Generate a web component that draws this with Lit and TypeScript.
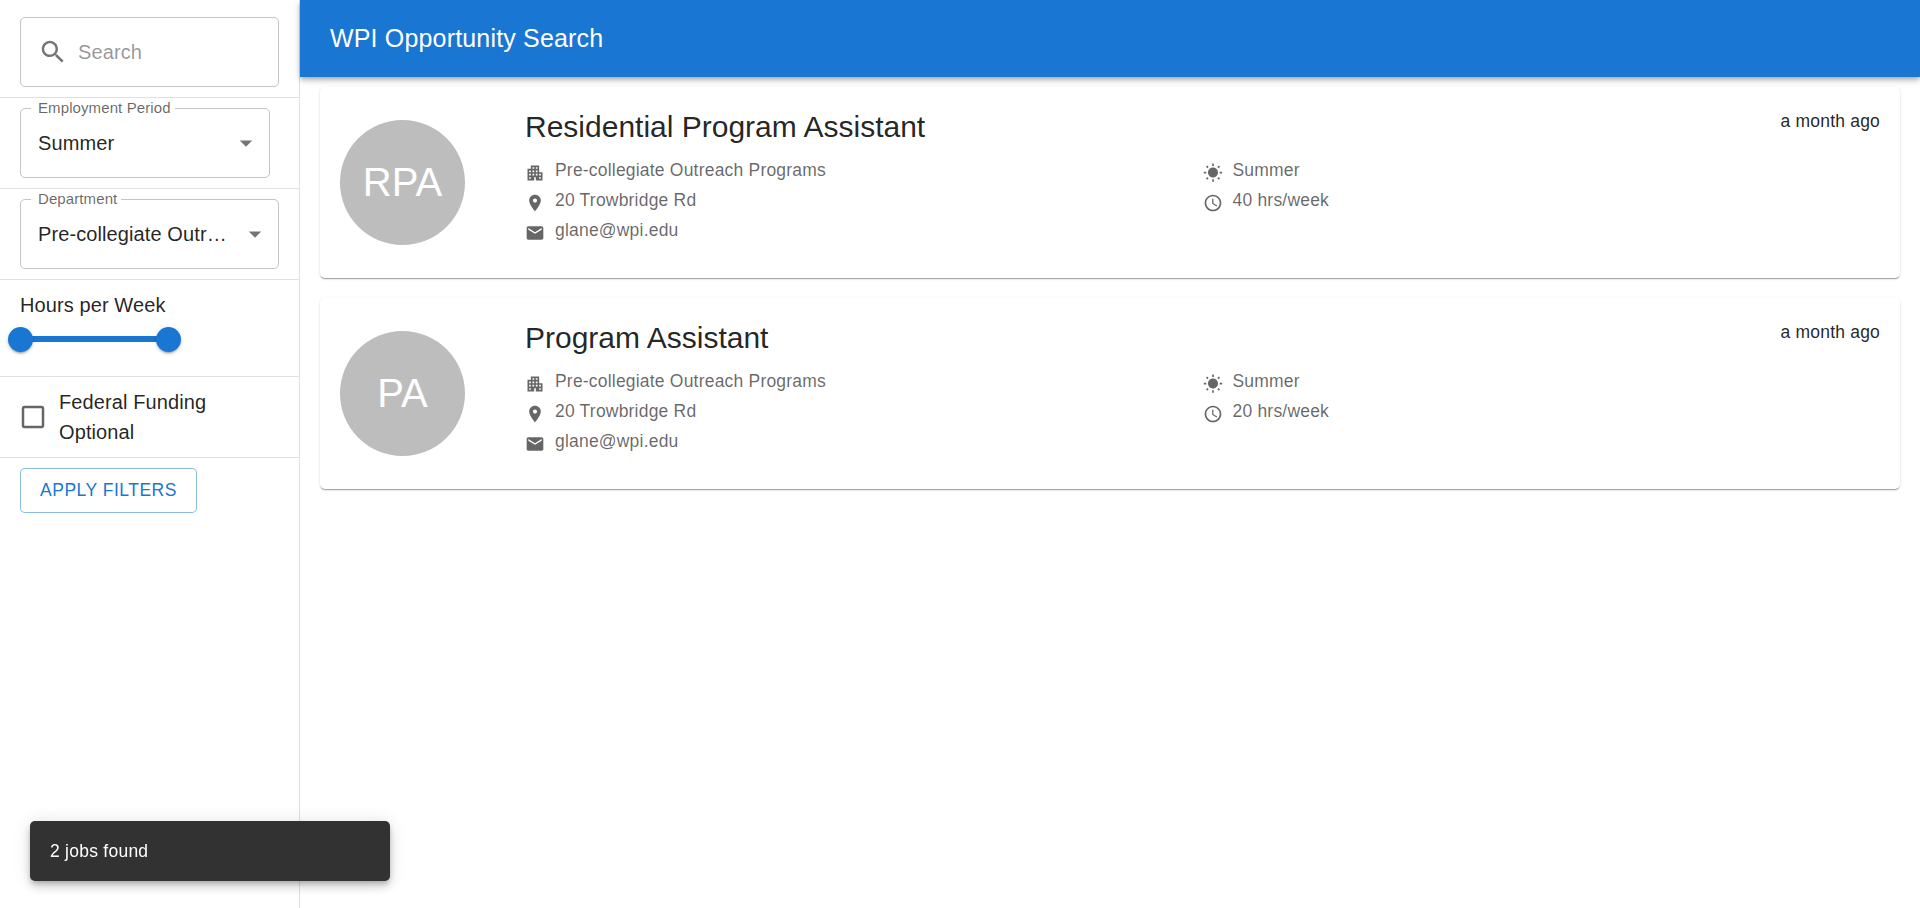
import { LitElement, html, css, svg } from 'lit';
import { customElement, property } from 'lit/decorators.js';

const ICONS: Record<string, string> = {
  search: 'M15.5 14h-.79l-.28-.27C15.41 12.59 16 11.11 16 9.5 16 5.91 13.09 3 9.5 3S3 5.91 3 9.5 5.91 16 9.5 16c1.61 0 3.09-.59 4.23-1.57l.27.28v.79l5 4.99L20.49 19l-4.99-5zm-6 0C7.01 14 5 11.99 5 9.5S7.01 5 9.5 5 14 7.01 14 9.5 11.99 14 9.5 14z',
  arrow: 'M7 10l5 5 5-5z',
  checkbox: 'M19 5v14H5V5h14m0-2H5c-1.1 0-2 .9-2 2v14c0 1.1.9 2 2 2h14c1.1 0 2-.9 2-2V5c0-1.1-.9-2-2-2z',
  apartment: 'M17 11V3H7v4H3v14h8v-4h2v4h8V11h-4zM7 19H5v-2h2v2zm0-4H5v-2h2v2zm0-4H5V9h2v2zm4 4H9v-2h2v2zm0-4H9V9h2v2zm0-4H9V5h2v2zm4 8h-2v-2h2v2zm0-4h-2V9h2v2zm0-4h-2V5h2v2zm4 12h-2v-2h2v2zm0-4h-2v-2h2v2z',
  room: 'M12 2C8.13 2 5 5.13 5 9c0 5.25 7 13 7 13s7-7.75 7-13c0-3.87-3.13-7-7-7zm0 9.5c-1.38 0-2.5-1.12-2.5-2.5s1.12-2.5 2.5-2.5 2.5 1.12 2.5 2.5-1.12 2.5-2.5 2.5z',
  mail: 'M20 4H4c-1.1 0-1.99.9-1.99 2L2 18c0 1.1.9 2 2 2h16c1.1 0 2-.9 2-2V6c0-1.1-.9-2-2-2zm0 4l-8 5-8-5V6l8 5 8-5v2z',
  sun: 'M6.76 4.84l-1.8-1.79-1.41 1.41 1.79 1.79 1.42-1.41zM4 10.5H1v2h3v-2zm9-9.95h-2V3.5h2V.55zm7.45 3.91l-1.41-1.41-1.79 1.79 1.41 1.41 1.79-1.79zm-3.21 13.7l1.79 1.8 1.41-1.41-1.8-1.79-1.4 1.4zM20 10.5v2h3v-2h-3zm-8-5c-3.31 0-6 2.69-6 6s2.69 6 6 6 6-2.69 6-6-2.69-6-6-6zm-1 16.95h2V19.5h-2v2.95zm-7.45-3.91l1.41 1.41 1.79-1.8-1.41-1.41-1.79 1.8z',
  clock: 'M11.99 2C6.47 2 2 6.48 2 12s4.47 10 9.99 10C17.52 22 22 17.52 22 12S17.52 2 11.99 2zM12 20c-4.42 0-8-3.58-8-8s3.58-8 8-8 8 3.58 8 8-3.58 8-8 8zm.5-13H11v6l5.25 3.15.75-1.23-4.5-2.67z',
};

const icon = (name: string) => html`<svg viewBox="0 0 24 24" fill="currentColor">${svg`<path d=${ICONS[name]}></path>`}</svg>`;

interface Job {
  title: string;
  initials: string;
  hours: number;
}

const JOBS: Job[] = [
  { title: 'Residential Program Assistant', initials: 'RPA', hours: 40 },
  { title: 'Program Assistant', initials: 'PA', hours: 20 },
];

@customElement('job-card')
class JobCard extends LitElement {
  @property({ attribute: false }) job!: Job;

  static styles = css`
    :host {
      display: block;
    }
    .card {
      display: flex;
      align-items: center;
      padding: 20px 20px 33px;
      height: 191px;
      box-sizing: border-box;
      background: #fff;
      border-radius: 5px;
      color: rgba(0, 0, 0, 0.87);
      box-shadow: 0 2px 1px -1px rgba(0, 0, 0, 0.2), 0 1px 1px 0 rgba(0, 0, 0, 0.14), 0 1px 3px 0 rgba(0, 0, 0, 0.12);
    }
    .avatar-col {
      flex: 0 0 185px;
      align-self: flex-start;
      padding-top: 13px;
    }
    .avatar {
      width: 125px;
      height: 125px;
      border-radius: 50%;
      background: #bdbdbd;
      color: #fff;
      font-size: 40px;
      display: flex;
      align-items: center;
      justify-content: center;
    }
    .details {
      flex: 1;
      align-self: flex-start;
    }
    .top {
      display: flex;
      justify-content: space-between;
      align-items: flex-start;
    }
    h2 {
      margin: 0;
      font-size: 30px;
      font-weight: 400;
      line-height: 40px;
    }
    .date {
      font-size: 17.5px;
      line-height: 28px;
      letter-spacing: 0.2px;
    }
    .cols {
      display: grid;
      grid-template-columns: 1fr 1fr;
      margin-top: 8px;
    }
    .row {
      display: flex;
      gap: 10px;
      height: 30px;
      font-size: 17.5px;
      line-height: 30px;
      letter-spacing: 0.2px;
      color: rgba(0, 0, 0, 0.6);
    }
    .row svg {
      flex: none;
      width: 20px;
      height: 20px;
      margin-top: 8px;
      color: rgba(0, 0, 0, 0.6);
    }
  `;

  render() {
    const { title, initials, hours } = this.job;
    return html`
      <div class="card">
        <div class="avatar-col"><div class="avatar">${initials}</div></div>
        <div class="details">
          <div class="top">
            <h2>${title}</h2>
            <div class="date">a month ago</div>
          </div>
          <div class="cols">
            <div>
              <div class="row">${icon('apartment')}Pre-collegiate Outreach Programs</div>
              <div class="row">${icon('room')}20 Trowbridge Rd</div>
              <div class="row">${icon('mail')}glane@wpi.edu</div>
            </div>
            <div>
              <div class="row">${icon('sun')}Summer</div>
              <div class="row">${icon('clock')}${hours} hrs/week</div>
            </div>
          </div>
        </div>
      </div>
    `;
  }
}

@customElement('app-root')
class AppRoot extends LitElement {
  static styles = css`
    :host {
      display: flex;
      min-height: 908px;
      font-family: 'Liberation Sans', Arial, sans-serif;
      background: #fff;
      color: rgba(0, 0, 0, 0.87);
    }
    .sidebar {
      flex: none;
      width: 300px;
      min-width: 0;
      box-sizing: border-box;
      border-right: 1px solid #e0e0e0;
      font-size: 20px;
      letter-spacing: 0.1px;
    }
    .section {
      padding: 10px 20px;
      border-bottom: 1px solid #e0e0e0;
    }
    .section.search-section {
      padding-top: 17px;
    }
    .section.last {
      border-bottom: 0;
    }
    .field {
      position: relative;
      display: flex;
      align-items: center;
      box-sizing: border-box;
      height: 70px;
      border: 1px solid rgba(0, 0, 0, 0.23);
      border-radius: 5px;
      padding-left: 17px;
    }
    .field.narrow {
      width: 250px;
    }
    .search-icon {
      width: 30px;
      height: 30px;
      margin-right: 10px;
      color: rgba(0, 0, 0, 0.54);
      flex: none;
    }
    .search-icon svg,
    .arrow svg,
    .checkbox svg {
      display: block;
      width: 100%;
      height: 100%;
    }
    .placeholder {
      color: rgba(0, 0, 0, 0.42);
    }
    .legend {
      position: absolute;
      left: 10px;
      top: -11px;
      padding: 0 4px 0 7px;
      background: #fff;
      font-size: 15px;
      line-height: 20px;
      color: rgba(0, 0, 0, 0.6);
      white-space: nowrap;
    }
    .value {
      flex: 1;
      min-width: 0;
      overflow: hidden;
      white-space: nowrap;
      text-overflow: ellipsis;
    }
    .arrow {
      flex: none;
      width: 30px;
      height: 30px;
      margin: 0 8px 0 6px;
      color: rgba(0, 0, 0, 0.54);
    }
    .hours {
      height: 76px;
    }
    .hours-label {
      line-height: 30px;
    }
    .track {
      position: relative;
      width: 148px;
      height: 6px;
      margin-top: 16px;
      background: #1976d2;
      border-radius: 3px;
    }
    .thumb {
      position: absolute;
      top: -9.5px;
      width: 25px;
      height: 25px;
      border-radius: 50%;
      background: #1976d2;
      box-shadow: 0 3px 1px -2px rgba(0, 0, 0, 0.2), 0 2px 2px 0 rgba(0, 0, 0, 0.14), 0 1px 5px 0 rgba(0, 0, 0, 0.12);
    }
    .thumb.start {
      left: -12.5px;
    }
    .thumb.end {
      right: -12.5px;
    }
    .section.funding {
      display: flex;
      align-items: center;
      padding: 10px 20px 10px 18px;
      line-height: 30px;
    }
    .checkbox {
      flex: none;
      width: 30px;
      height: 30px;
      margin-right: 11px;
      color: rgba(0, 0, 0, 0.6);
    }
    button {
      display: block;
      box-sizing: border-box;
      width: 177px;
      height: 45px;
      padding: 0;
      font: inherit;
      font-size: 17.5px;
      color: #1976d2;
      background: #fff;
      border: 1px solid rgba(25, 118, 210, 0.5);
      border-radius: 5px;
      letter-spacing: 0.5px;
    }
    .main {
      flex: 1;
      min-width: 0;
    }
    header {
      display: flex;
      align-items: center;
      height: 77px;
      padding-left: 30px;
      background: #1976d2;
      color: #fff;
      font-size: 25px;
      letter-spacing: 0.17px;
      box-shadow: 0 2px 4px -1px rgba(0, 0, 0, 0.2), 0 4px 5px 0 rgba(0, 0, 0, 0.14), 0 1px 10px 0 rgba(0, 0, 0, 0.12);
    }
    .jobs {
      display: flex;
      flex-direction: column;
      gap: 20px;
      padding: 10px 20px;
    }
    .toast {
      position: fixed;
      left: 30px;
      bottom: 27px;
      display: flex;
      align-items: center;
      box-sizing: border-box;
      width: 360px;
      height: 60px;
      padding-left: 20px;
      border-radius: 5px;
      background: #323232;
      color: #fff;
      font-size: 17.5px;
      letter-spacing: 0.25px;
      box-shadow: 0 3px 5px -1px rgba(0, 0, 0, 0.2), 0 6px 10px 0 rgba(0, 0, 0, 0.14), 0 1px 18px 0 rgba(0, 0, 0, 0.12);
    }
  `;

  render() {
    return html`
      <aside class="sidebar">
        <div class="section search-section">
          <div class="field">
            <span class="search-icon">${icon('search')}</span>
            <span class="placeholder">Search</span>
          </div>
        </div>
        <div class="section">
          <div class="field narrow">
            <span class="legend">Employment Period</span>
            <span class="value">Summer</span>
            <span class="arrow">${icon('arrow')}</span>
          </div>
        </div>
        <div class="section">
          <div class="field">
            <span class="legend">Department</span>
            <span class="value">Pre-collegiate Outreach Programs</span>
            <span class="arrow">${icon('arrow')}</span>
          </div>
        </div>
        <div class="section hours">
          <div class="hours-label">Hours per Week</div>
          <div class="track">
            <span class="thumb start"></span>
            <span class="thumb end"></span>
          </div>
        </div>
        <div class="section funding">
          <span class="checkbox">${icon('checkbox')}</span>
          <span>Federal Funding Optional</span>
        </div>
        <div class="section last">
          <button>APPLY FILTERS</button>
        </div>
      </aside>
      <div class="main">
        <header>WPI Opportunity Search</header>
        <div class="jobs">
          ${JOBS.map((job) => html`<job-card .job=${job}></job-card>`)}
        </div>
      </div>
      <div class="toast">2 jobs found</div>
    `;
  }
}
